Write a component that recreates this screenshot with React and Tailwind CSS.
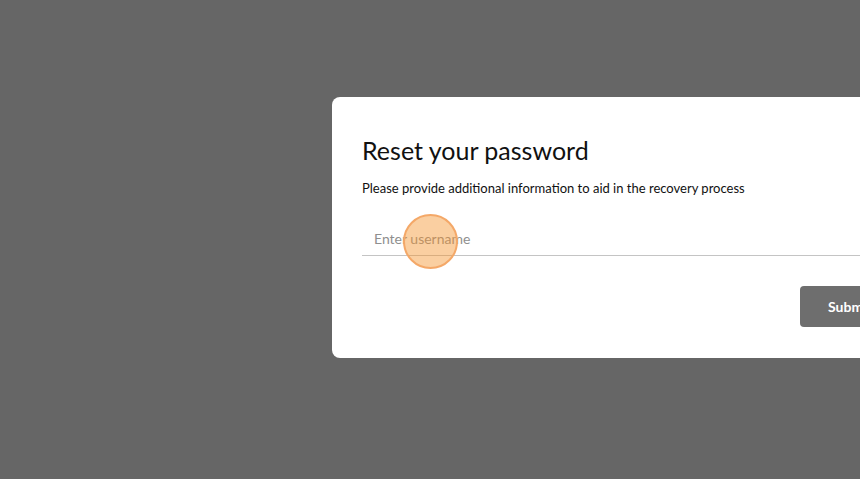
export default function App() {
  return (
    <div className="w-[860px] h-[479px] overflow-hidden bg-[#666666] relative" style={{ fontFamily: 'Lato, "Open Sans", sans-serif' }}>
      <div className="absolute left-[332px] top-[97px] w-[600px] h-[261px] bg-white rounded-[8px] pl-[30px] pr-[30px] pt-[37px]">
        <h1 className="text-[25px] leading-[32px] text-[#111] font-normal">Reset your password</h1>
        <p className="mt-[13px] text-[13px] leading-[18px] text-[#111]">Please provide additional information to aid in the recovery process</p>
        <div className="mt-[28px] relative border-b border-[#c4c4c4] pt-[1px] pb-[5px] pl-[12px]">
          <span className="text-[14px] leading-[20px] text-[#8f8f8f]">Enter username</span>
          <div className="absolute left-[41px] top-[-11px] w-[55px] h-[55px] rounded-full bg-[#f5952f]/45 border-2 border-[#f4a868]"></div>
        </div>
        <div className="flex justify-end mt-[30px]">
          <button className="ml-[438px] h-[41px] w-[120px] rounded-[4px] bg-[#6e6e6e] text-white font-bold text-[14px] text-left pl-[28px]">Submit</button>
        </div>
      </div>
    </div>
  );
}
